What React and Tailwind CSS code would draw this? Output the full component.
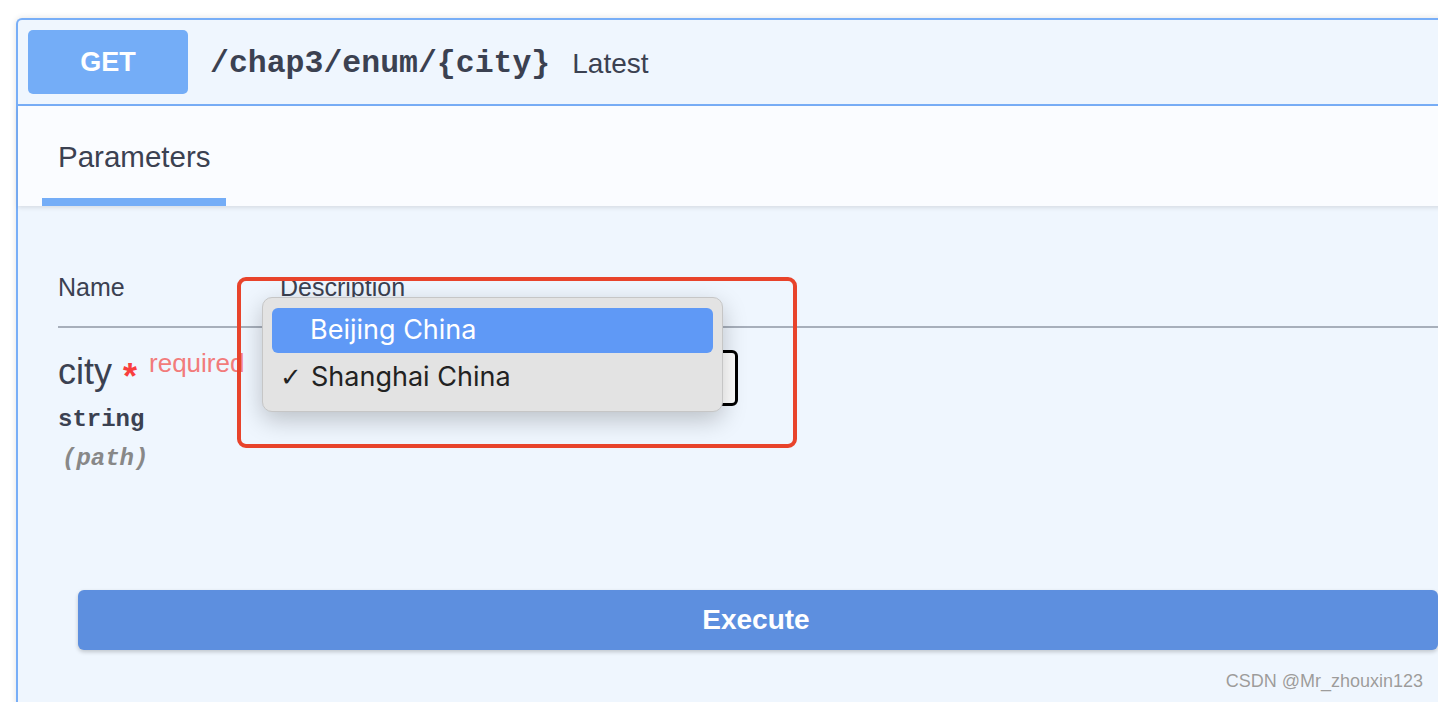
import React from "react";

const sans = { fontFamily: '"Liberation Sans", Arial, sans-serif' };

export default function App() {
  return (
    <div
      className="relative h-[702px] w-[1438px] overflow-hidden bg-white pl-4 pt-[18px] text-[#3b4151]"
      style={sans}
    >
      {/* card */}
      <div className="w-[1440px] rounded-tl-[6px] border-l-2 border-t-2 border-[#78aef7] bg-[#eff6fe] shadow-[0_0_6px_rgba(0,0,0,0.12)]">
        {/* summary */}
        <div className="flex h-[86px] items-center border-b-2 border-[#78aef7] pl-[10px]">
          <div className="flex h-16 w-40 items-center justify-center rounded-[5px] bg-[#74adf7] text-[27px] font-bold text-white">
            GET
          </div>
          <span className="ml-[22px] mt-[3px] font-['Liberation_Mono',monospace] text-[31.5px] font-bold text-[#3b4151]">
            /chap3/enum/&#123;city&#125;
          </span>
          <span className="ml-[22px] mt-[3px] text-[28px] text-[#3b4151]">Latest</span>
        </div>

        {/* tabs */}
        <div className="flex h-[100px] bg-[#fafcff] pl-6 shadow-[0_2px_4px_rgba(0,0,0,0.1)]">
          <div className="flex w-[184px] flex-col justify-between">
            <span className="mt-[33px] pl-4 text-[29.5px] leading-[36px] text-[#3b4151]">Parameters</span>
            <div className="h-2 bg-[#74adf7]" />
          </div>
        </div>

        {/* body */}
        <div className="relative h-[500px] pl-10 pt-[62px]">
          <div className="flex h-[60px] items-start border-b-2 border-[#a7afbb] pt-[5px] text-[25px] leading-[28px]">
            <span className="w-[222px]">Name</span>
            <span>Description</span>
          </div>

          <div className="flex pt-[19px]">
            <div className="w-[222px]">
              <div className="flex items-start">
                <span className="text-[36px] leading-[50px]">city</span>
                <span className="ml-[11px] mt-[10px] text-[36px] font-bold leading-[40px] text-[#f93e3e]">*</span>
                <span className="ml-[12px] mt-[1px] text-[26px] leading-[30px] text-[#f27b7b]">required</span>
              </div>
              <div className="mt-[7px] font-['Liberation_Mono',monospace] text-[24px] font-bold leading-[32px]">
                string
              </div>
              <div className="mt-[7px] pl-1 font-['Liberation_Mono',monospace] text-[24px] font-bold italic leading-[32px] text-[#888]">
                (path)
              </div>
            </div>
            <div className="pt-[3px]">
              <div className="h-[56px] w-[458px] rounded-[6px] border-[3px] border-black bg-white" />
            </div>
          </div>

          <div className="ml-5 mt-[115px] flex h-[60px] w-[1360px] items-center justify-center rounded-[6px] bg-[#5d8fdf] pr-[4px] text-[28px] font-bold text-white shadow-[0_2px_4px_rgba(0,0,0,0.2)]">
            Execute
          </div>

          {/* select dropdown menu */}
          <div
            className="absolute left-[244px] top-[91px] w-[461px] rounded-[10px] border border-[#c6c6c6] bg-[#e3e3e3] px-[9px] py-[10px] shadow-[0_8px_24px_rgba(0,0,0,0.22)]"
            style={{ fontFamily: 'Inter, "Liberation Sans", sans-serif' }}
          >
            <div className="flex h-[45px] items-center rounded-[6px] bg-[#5f99f6] pl-[38px] text-[27px] text-white">
              Beijing China
            </div>
            <div className="flex h-[48px] items-center text-[27px] text-[#222]">
              <span className="w-[39px] pl-[8px] font-['DejaVu_Sans',sans-serif] text-[26px] font-bold">✓</span>
              Shanghai China
            </div>
          </div>

          {/* annotation box */}
          <div className="absolute left-[219px] top-[71px] h-[171px] w-[560px] rounded-[9px] border-4 border-[#e8432b]" />
        </div>
      </div>

      <div className="absolute bottom-[7px] right-[15px] text-[18px] text-[#9c9c9c] [text-shadow:0_0_1px_#fff]">
        CSDN @Mr_zhouxin123
      </div>
    </div>
  );
}
